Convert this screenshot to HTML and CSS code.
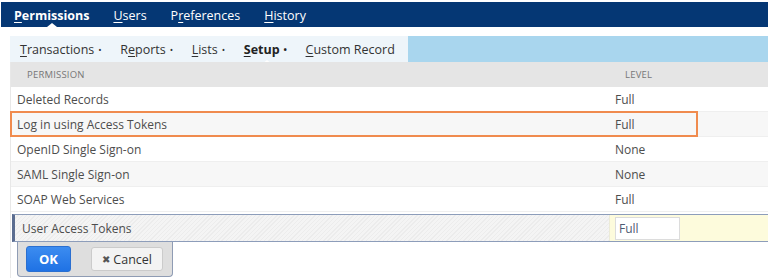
FILE: index.html
```html
<!DOCTYPE html>
<html>
<head>
<meta charset="utf-8">
<link rel="stylesheet" href="styles.css">
</head>
<body>
<div class="topnav">
  <span class="tn active"><u>P</u>ermissions<span class="ptr"></span></span>
  <span class="tn"><u>U</u>sers</span>
  <span class="tn">P<u>r</u>eferences</span>
  <span class="tn"><u>H</u>istory</span>
</div>
<div class="page">
  <div class="subtabs">
    <div class="subtab-list">
      <span class="st"><u>T</u>ransactions<span class="dot">•</span></span>
      <span class="st">R<u>e</u>ports<span class="dot">•</span></span>
      <span class="st"><u>L</u>ists<span class="dot">•</span></span>
      <span class="st cur"><u>S</u>etup<span class="dot">•</span><span class="ptr2"></span></span>
      <span class="st"><u>C</u>ustom Record</span>
    </div>
    <div class="subtab-fill"></div>
  </div>
  <div class="grid">
    <div class="row head"><div class="c1">PERMISSION</div><div class="c2">LEVEL</div></div>
    <div class="row"><div class="c1">Deleted Records</div><div class="c2">Full</div></div>
    <div class="row alt"><div class="c1">Log in using Access Tokens</div><div class="c2">Full</div></div>
    <div class="row"><div class="c1">OpenID Single Sign-on</div><div class="c2">None</div></div>
    <div class="row alt"><div class="c1">SAML Single Sign-on</div><div class="c2">None</div></div>
    <div class="row"><div class="c1">SOAP Web Services</div><div class="c2">Full</div></div>
    <div class="row edit"><div class="c1">User Access Tokens</div><div class="c2"><span class="inp">Full</span></div></div>
    <div class="btnbar">
      <span class="btn ok">OK</span>
      <span class="btn cancel"><span class="x">✖</span>Cancel</span>
    </div>
    <div class="hl"></div>
  </div>
</div>
</body>
</html>
```
FILE: styles.css
```css
* { box-sizing: border-box; }
body {
  margin: 0;
  background: #fff;
  font-family: "Open Sans", "DejaVu Sans", sans-serif;
  font-size: 12px;
  color: #4d4d4d;
  width: 768px;
  height: 278px;
  overflow: hidden;
}
u { text-decoration: underline; text-underline-offset: 2px; text-decoration-thickness: 1px; }

.topnav {
  margin: 2px 0 0 1px;
  height: 25px;
  background: #053774;
  display: flex;
  align-items: center;
  gap: 24px;
  padding: 2px 0 0 13px;
  position: relative;
}
.tn {
  color: #fff;
  font-size: 12.5px;
  position: relative;
  line-height: 23px;
}
.tn.active { font-weight: 700; }
.ptr {
  position: absolute;
  left: 33px;
  bottom: 0;
  width: 0; height: 0;
  border-left: 5px solid transparent;
  border-right: 5px solid transparent;
  border-bottom: 4px solid #fff;
}

.page { padding-left: 10px; }

.subtabs {
  margin-top: 9px;
  height: 26px;
  display: flex;
}
.subtab-list {
  width: 398px;
  background: #eef5fa;
  display: flex;
  align-items: center;
  padding: 1px 0 0 10px;
  gap: 18.6px;
}
.subtab-fill { flex: 1; background: #a9d6ee; }
.st { color: #333; font-size: 12.5px; position: relative; white-space: nowrap; }
.st.cur { font-weight: 700; color: #222; }
.dot { font-size: 9px; margin-left: 4px; vertical-align: 1px; }
.ptr2 {
  position: absolute;
  left: 18px;
  bottom: -6px;
  width: 0; height: 0;
  border-left: 5px solid transparent;
  border-right: 5px solid transparent;
  border-bottom: 4px solid #fff;
}

.grid {
  position: relative;
  border-left: 1px solid #e8e8e8;
  height: 216px;
}
.row {
  display: flex;
  height: 25px;
  align-items: center;
  border-bottom: 1px solid #efefef;
  background: #fff;
}
.row.alt { background: #f7f7f7; }
.row .c1 { width: 599px; padding-left: 6px; }
.row .c2 { flex: 1; padding-left: 5px; }
.row.head {
  background: #e5e5e5;
  height: 25px;
  border-bottom: none;
  font-size: 9.5px;
  color: #777;
  letter-spacing: 0.2px;
}
.row.head .c1 { padding-left: 16px; }
.row.head .c2 { padding-left: 15px; }

.row.edit {
  margin-top: 2px;
  height: 28px;
  border-top: 1px solid #8d9dba;
  border-bottom: 1px solid #8d9dba;
  border-left: 3px solid #5b6d90;
  margin-left: 1px;
  background: repeating-linear-gradient(135deg, #f4f4f4 0 2px, #ececec 2px 3px);
  align-items: stretch;
}
.row.edit .c1 { width: 594px; padding-left: 7px; display: flex; align-items: center; }
.row.edit .c2 {
  background: #fdfbdc;
  padding: 2px 0 0 5px;
  border-left: 1px solid #ecebd8;
}
.inp {
  display: flex;
  align-items: center;
  width: 65px;
  height: 23px;
  background: #fff;
  border: 1px solid #dcdcdc;
  padding-left: 3px;
  color: #4f5b73;
}

.btnbar {
  margin-left: 6px;
  width: 156px;
  height: 35px;
  background: #dedede;
  border: 1px solid #8f9cb4;
  border-top: none;
  border-radius: 0 0 4px 4px;
  display: flex;
  align-items: center;
  gap: 20px;
  padding-left: 8px;
}
.btn {
  display: flex;
  align-items: center;
  justify-content: center;
  border-radius: 3px;
}
.btn.ok {
  width: 45px;
  height: 26px;
  background: linear-gradient(#3c8cf0, #1f72e4);
  color: #fff;
  font-weight: 700;
  font-size: 13px;
  border: 1px solid #2a6fd0;
}
.btn.cancel {
  width: 72px;
  height: 24px;
  background: #f3f3f3;
  border: 1px solid #cbcbcb;
  color: #333;
  font-size: 12.5px;
  gap: 3px;
}
.x { font-size: 10px; color: #555; }

.hl {
  position: absolute;
  left: -1px;
  top: 49px;
  width: 688px;
  height: 26px;
  border: 2px solid #f08b4e;
  pointer-events: none;
}
```
